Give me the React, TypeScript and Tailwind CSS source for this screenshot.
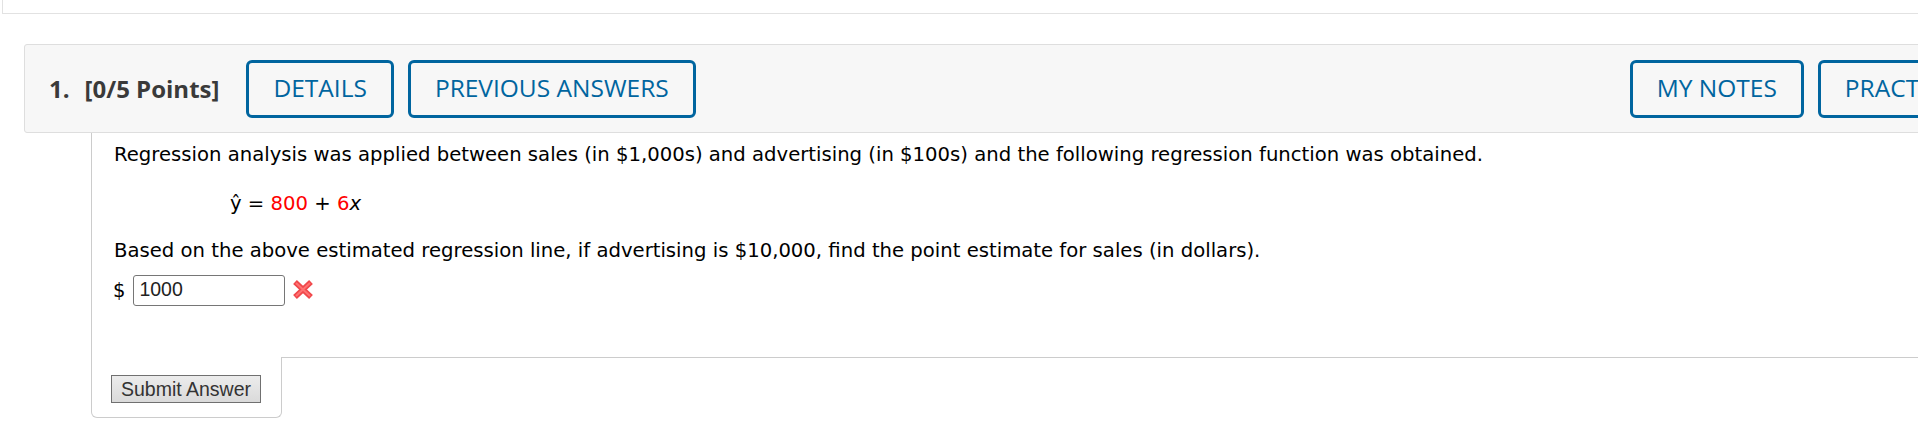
import React from "react";

const btn =
  "h-[58px] flex items-center px-[24px] border-[3px] border-[#00659f] rounded-[6px] text-[#00659f] text-[24.5px] bg-[#f7f7f7] whitespace-nowrap";

function WrongMark() {
  return (
    <svg width="22" height="21" viewBox="0 0 22 21" className="ml-[7px] mt-[4px]">
      <path d="M3 3 L19 18 M19 3 L3 18" stroke="#f0484b" strokeWidth="5.5" strokeLinecap="butt" />
      <path d="M4 4 L18 17 M18 4 L4 17" stroke="#ff7272" strokeWidth="2" />
    </svg>
  );
}

export default function App() {
  return (
    <div className="w-[1918px] h-[448px] overflow-hidden bg-white relative">
      {/* box above */}
      <div className="ml-[2px] w-[1940px] h-[14px] border border-t-0 border-[#e2e2e2]" />

      <div className="ml-[24px] mt-[30px] w-[2200px]">
        {/* header */}
        <div
          className="h-[89px] flex items-center pl-[24px] bg-[#f7f7f7] border border-[#dedede] rounded-[3px]"
          style={{ fontFamily: '"Open Sans", sans-serif' }}
        >
          <span className="text-[24px] font-bold text-[#3a3a3a] whitespace-nowrap">1.</span>
          <span className="ml-[15px] text-[24px] font-bold text-[#3a3a3a] whitespace-nowrap">[0/5 Points]</span>
          <div className="ml-[27px] flex gap-[14px]">
            <div className={btn}>DETAILS</div>
            <div className={btn}>PREVIOUS ANSWERS</div>
          </div>
          <div className="ml-[934px] flex gap-[14px]">
            <div className={btn}>MY NOTES</div>
            <div className={btn}>PRACTICE ANOTHER</div>
          </div>
        </div>

        {/* question body */}
        <div className="ml-[67px] border-l border-[#cccccc] pl-[22px] pt-[10px] pb-[51px] text-black"
          style={{ fontFamily: '"DejaVu Sans", Verdana, sans-serif' }}
        >
          <p className="text-[19.65px] leading-[24px] whitespace-nowrap">
            Regression analysis was applied between sales (in $1,000s) and advertising (in $100s) and the following regression function was obtained.
          </p>
          <p className="mt-[25px] pl-[116px] text-[19.65px] leading-[24px] whitespace-nowrap">
            ŷ = <span className="text-[#ff0000]">800</span> + <span className="text-[#ff0000]">6</span>
            <i>x</i>
          </p>
          <p className="mt-[23px] text-[19.65px] leading-[24px] whitespace-nowrap">
            Based on the above estimated regression line, if advertising is $10,000, find the point estimate for sales (in dollars).
          </p>
          <div className="mt-[12px] flex items-start">
            <span className="text-[19.5px] leading-[31px] -ml-[1px]">$</span>
            <div
              className="ml-[8px] w-[152px] h-[31px] border border-[#767676] rounded-[3px] pl-[5px] text-[19.5px] leading-[27px] text-[#222]"
              style={{ fontFamily: '"Liberation Sans", Arial, sans-serif' }}
            >
              1000
            </div>
            <WrongMark />
          </div>
        </div>

        {/* footer */}
        <div className="ml-[67px] flex">
          <div className="w-[191px] h-[61px] border border-t-0 border-[#cccccc] rounded-b-[6px] pl-[19px] pt-[18px]">
            <div
              className="w-[150px] h-[28px] border border-[#707070] bg-gradient-to-b from-[#ececec] to-[#dadada] text-[19.5px] leading-[26px] text-[#333] text-center whitespace-nowrap"
              style={{ fontFamily: '"Liberation Sans", Arial, sans-serif' }}
            >
              Submit Answer
            </div>
          </div>
          <div className="flex-1 border-t border-[#cccccc] -ml-[1px]" />
        </div>
      </div>
    </div>
  );
}
